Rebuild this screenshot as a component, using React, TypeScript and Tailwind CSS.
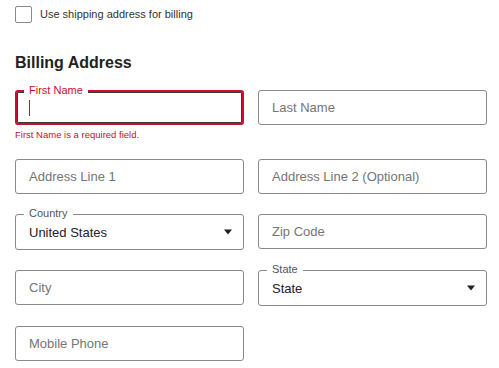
function Field({ placeholder }: { placeholder: string }) {
  return (
    <div className="flex h-[35px] items-center rounded-[3px] border border-[#8a8a8a] px-[13px] text-[13px] text-[#757575]">
      {placeholder}
    </div>
  )
}

function SelectField({ label, value }: { label: string; value: string }) {
  return (
    <div className="relative flex h-[36px] items-center justify-between rounded-[3px] border border-[#8a8a8a] pl-[13px] pr-[10px] text-[13px] text-[#222]">
      <span className="absolute left-[8px] top-[-9px] bg-white px-[5px] text-[11px] leading-[14px] text-[#555]">
        {label}
      </span>
      <span className="pt-[1px]">{value}</span>
      <svg width="8" height="6" viewBox="0 0 8 6" className="mr-[1px]">
        <path d="M0 0.5h8L4 5.5z" fill="#222" />
      </svg>
    </div>
  )
}

export default function App() {
  return (
    <main className="h-[368px] w-[499px] overflow-hidden bg-white pl-[15px] pr-[12px] font-['Liberation_Sans',Arial,sans-serif]">
      <label className="flex items-center gap-[8px] pt-[6px]">
        <span className="h-[17px] w-[17px] rounded-[2px] border border-[#8a8a8a] bg-white" />
        <span className="text-[11px] text-[#333]">Use shipping address for billing</span>
      </label>

      <h2 className="mt-[30px] text-[16px] font-bold leading-[20px] text-[#222]">Billing Address</h2>

      <div className="mt-[17px] grid grid-cols-2 gap-x-[14px]">
        <div>
          <div className="relative flex h-[35px] items-center rounded-[3px] border-2 border-[#c8102e] px-[12px] shadow-[inset_0_0_0_1px_#3a3a3a]">
            <span className="absolute left-[7px] top-[-9px] bg-white px-[5px] text-[11px] leading-[14px] text-[#c8102e]">
              First Name
            </span>
            <span className="h-[16px] w-px bg-[#c8102e]" />
          </div>
          <p className="mt-[4px] text-[9.5px] leading-[12px] text-[#c8102e]">First Name is a required field.</p>
        </div>
        <Field placeholder="Last Name" />

        <div className="mt-[18px]">
          <Field placeholder="Address Line 1" />
        </div>
        <div className="mt-[18px]">
          <Field placeholder="Address Line 2 (Optional)" />
        </div>

        <div className="mt-[20px]">
          <SelectField label="Country" value="United States" />
        </div>
        <div className="mt-[20px]">
          <Field placeholder="Zip Code" />
        </div>

        <div className="mt-[20px]">
          <Field placeholder="City" />
        </div>
        <div className="mt-[20px]">
          <SelectField label="State" value="State" />
        </div>

        <div className="mt-[20px]">
          <Field placeholder="Mobile Phone" />
        </div>
      </div>
    </main>
  )
}
